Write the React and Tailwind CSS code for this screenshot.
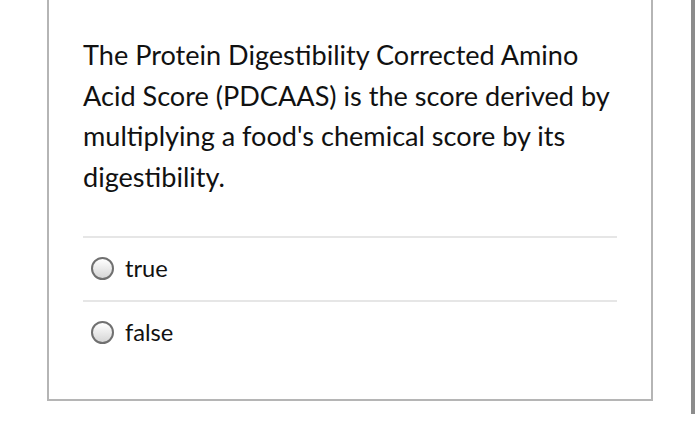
import React from "react";

const options = ["true", "false"];

const Radio = () => (
  <span className="inline-block w-[23px] h-[23px] rounded-full border-2 border-[#707070] bg-gradient-to-b from-white to-[#d6d6d6] shrink-0" />
);

const App = () => {
  return (
    <div className="flex w-[700px] h-[421px] bg-white overflow-hidden" style={{ fontFamily: "Lato, 'Open Sans', sans-serif" }}>
      <div className="ml-[47px] w-[606px] h-[401px] border-2 border-t-0 border-[#b5b5b5] px-[34px] pt-[35px] pb-[35px] flex flex-col">
        <p className="text-[27.1px] leading-[40.7px] text-[#111]">
          The Protein Digestibility Corrected Amino Acid Score (PDCAAS) is the score derived by multiplying a food's chemical score by its digestibility.
        </p>
        <div className="mt-[38px]">
          {options.map((opt) => (
            <div key={opt} className="h-[64px] border-t-2 border-[#e6e6e6] flex items-center pl-[8px] gap-[11px]">
              <Radio />
              <span className="text-[23.7px] text-[#111]">{opt}</span>
            </div>
          ))}
        </div>
      </div>
      <div className="ml-[38px] w-[4px] h-[414px] bg-[#8c8c8c]" />
    </div>
  );
};

export default App;
